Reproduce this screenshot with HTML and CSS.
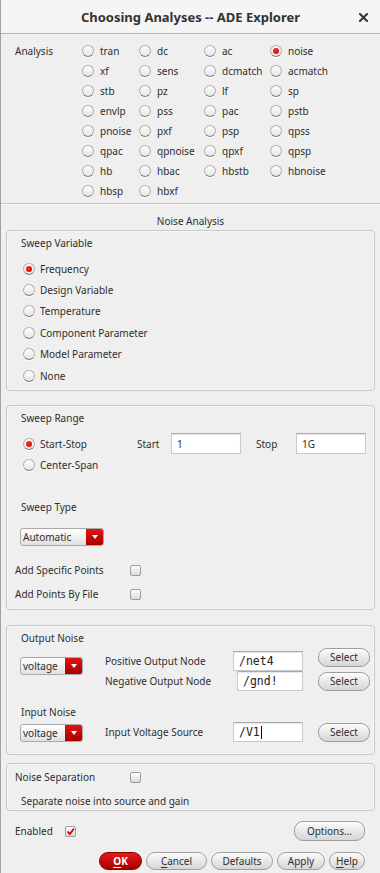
FILE: index.html
```html
<!DOCTYPE html>
<html lang="en">
<head>
    <meta charset="UTF-8">
    <meta name="viewport" content="width=device-width, initial-scale=1.0">
    <title>Choosing Analyses -- ADE Explorer</title>
    <link rel="stylesheet" href="styles.css">
</head>
<body>
<div class="window">
    <header class="titlebar">
        <span class="title">Choosing Analyses -- ADE Explorer</span>
        <svg class="close" width="9" height="9" viewBox="0 0 9 9">
            <path d="M1 1 L8 8 M8 1 L1 8" stroke="#333" stroke-width="2" stroke-linecap="square"/>
        </svg>
    </header>

    <section class="analysis">
        <div class="analysis-label">Analysis</div>
        <div class="analysis-grid">
            <label class="radio"><span class="radio-btn"></span>tran</label>
            <label class="radio"><span class="radio-btn"></span>dc</label>
            <label class="radio"><span class="radio-btn"></span>ac</label>
            <label class="radio"><span class="radio-btn on"></span>noise</label>
            <label class="radio"><span class="radio-btn"></span>xf</label>
            <label class="radio"><span class="radio-btn"></span>sens</label>
            <label class="radio"><span class="radio-btn"></span>dcmatch</label>
            <label class="radio"><span class="radio-btn"></span>acmatch</label>
            <label class="radio"><span class="radio-btn"></span>stb</label>
            <label class="radio"><span class="radio-btn"></span>pz</label>
            <label class="radio"><span class="radio-btn"></span>lf</label>
            <label class="radio"><span class="radio-btn"></span>sp</label>
            <label class="radio"><span class="radio-btn"></span>envlp</label>
            <label class="radio"><span class="radio-btn"></span>pss</label>
            <label class="radio"><span class="radio-btn"></span>pac</label>
            <label class="radio"><span class="radio-btn"></span>pstb</label>
            <label class="radio"><span class="radio-btn"></span>pnoise</label>
            <label class="radio"><span class="radio-btn"></span>pxf</label>
            <label class="radio"><span class="radio-btn"></span>psp</label>
            <label class="radio"><span class="radio-btn"></span>qpss</label>
            <label class="radio"><span class="radio-btn"></span>qpac</label>
            <label class="radio"><span class="radio-btn"></span>qpnoise</label>
            <label class="radio"><span class="radio-btn"></span>qpxf</label>
            <label class="radio"><span class="radio-btn"></span>qpsp</label>
            <label class="radio"><span class="radio-btn"></span>hb</label>
            <label class="radio"><span class="radio-btn"></span>hbac</label>
            <label class="radio"><span class="radio-btn"></span>hbstb</label>
            <label class="radio"><span class="radio-btn"></span>hbnoise</label>
            <label class="radio"><span class="radio-btn"></span>hbsp</label>
            <label class="radio"><span class="radio-btn"></span>hbxf</label>
        </div>
    </section>

    <div class="divider"></div>
    <div class="section-title">Noise Analysis</div>

    <div class="group sweep-var">
        <div class="group-title">Sweep Variable</div>
        <div class="radio-list">
            <label class="radio"><span class="radio-btn on"></span>Frequency</label>
            <label class="radio"><span class="radio-btn"></span>Design Variable</label>
            <label class="radio"><span class="radio-btn"></span>Temperature</label>
            <label class="radio"><span class="radio-btn"></span>Component Parameter</label>
            <label class="radio"><span class="radio-btn"></span>Model Parameter</label>
            <label class="radio"><span class="radio-btn"></span>None</label>
        </div>
    </div>

    <div class="group sweep-range">
        <div class="group-title">Sweep Range</div>
        <div class="range-row">
            <div class="radio-list range-radios">
                <label class="radio"><span class="radio-btn on"></span>Start-Stop</label>
                <label class="radio"><span class="radio-btn"></span>Center-Span</label>
            </div>
            <div class="range-fields">
                <span class="start-label">Start</span>
                <div class="field range-field">1</div>
                <span class="stop-label">Stop</span>
                <div class="field range-field">1G</div>
            </div>
        </div>
        <div class="group-title sweep-type">Sweep Type</div>
        <div class="combo combo-wide">
            <span class="combo-text">Automatic</span>
            <span class="combo-arrow"></span>
        </div>
        <div class="check-row first">
            <span class="check-label">Add Specific Points</span>
            <span class="check"></span>
        </div>
        <div class="check-row">
            <span class="check-label">Add Points By File</span>
            <span class="check"></span>
        </div>
    </div>

    <div class="group noise-nodes">
        <div class="group-title">Output Noise</div>
        <div class="node-grid">
            <div class="combo combo-small node-combo">
                <span class="combo-text">voltage</span>
                <span class="combo-arrow"></span>
            </div>
            <span class="node-label pos-label">Positive Output Node</span>
            <div class="field mono pos-field">/net4</div>
            <button class="btn pos-select">Select</button>
            <span class="node-label neg-label">Negative Output Node</span>
            <div class="field mono neg-field">/gnd!</div>
            <button class="btn neg-select">Select</button>
        </div>
        <div class="group-title input-title">Input Noise</div>
        <div class="node-grid single">
            <div class="combo combo-small src-combo">
                <span class="combo-text">voltage</span>
                <span class="combo-arrow"></span>
            </div>
            <span class="node-label">Input Voltage Source</span>
            <div class="field mono src-field">/V1<span class="caret"></span></div>
            <button class="btn src-select">Select</button>
        </div>
    </div>

    <div class="group separation">
        <div class="check-row">
            <span class="check-label">Noise Separation</span>
            <span class="check"></span>
        </div>
        <div class="sep-text">Separate noise into source and gain</div>
    </div>

    <div class="enabled-row">
        <div class="enabled">
            <span class="enabled-label">Enabled</span>
            <span class="check">
                <svg width="9" height="9" viewBox="0 0 9 9">
                    <path d="M1.5 4.5 L3.8 7 L8 1.5" fill="none" stroke="#d40000" stroke-width="1.8"/>
                </svg>
            </span>
        </div>
        <button class="btn options">Options...</button>
    </div>

    <div class="footer">
        <button class="btn btn-ok"><u>O</u>K</button>
        <button class="btn btn-cancel"><u>C</u>ancel</button>
        <button class="btn btn-defaults">Defaults</button>
        <button class="btn btn-apply">Apply</button>
        <button class="btn btn-help"><u>H</u>elp</button>
    </div>
</div>
</body>
</html>
```

FILE: styles.css
```css
body {
    margin: 0;
    font-family: "Noto Sans", sans-serif;
    font-size: 10px;
    color: #2e2e2e;
    background-color: #efefef;
}
.window {
    width: 380px;
    height: 873px;
    box-sizing: border-box;
    border-left: 1px solid #a2a2a2;
    background-color: #efefef;
    overflow: hidden;
}
.titlebar {
    height: 33px;
    border-bottom: 1px solid #b4b4b4;
    background-color: #f5f5f5;
    display: flex;
    align-items: center;
    justify-content: center;
    position: relative;
}
.title {
    font-size: 13px;
    font-weight: bold;
    color: #333;
}
.close {
    position: absolute;
    right: 12px;
    top: 13px;
}

/* analysis chooser */
.analysis {
    display: flex;
    padding: 7px 0 0 14px;
}
.analysis-label {
    width: 67px;
    line-height: 20px;
}
.analysis-grid {
    display: grid;
    grid-template-columns: 57px 65px 66px 1fr;
    grid-auto-rows: 20px;
}
.radio {
    display: flex;
    align-items: center;
    gap: 6px;
    white-space: nowrap;
}
.radio-btn {
    flex: none;
    width: 12px;
    height: 12px;
    box-sizing: border-box;
    border-radius: 50%;
    border: 1px solid #b0b0b0;
    border-bottom-color: #828282;
    background: linear-gradient(#fdfdfd, #e6e6e6);
    box-shadow: 0 1px 0 #fff;
    position: relative;
}
.radio-btn.on::after {
    content: "";
    position: absolute;
    left: 2px;
    top: 2px;
    width: 6px;
    height: 6px;
    border-radius: 50%;
    background: radial-gradient(circle at 40% 35%, #ff3030, #c00000);
}
.divider {
    margin-top: 2px;
    border-top: 1px solid #c4c4c4;
    border-bottom: 1px solid #fafafa;
}
.section-title {
    text-align: center;
    line-height: 14px;
    padding-top: 9px;
}

/* framed groups */
.group {
    margin: 2px 5px 0;
    border: 1px solid #c8c8c8;
    border-radius: 4px;
    padding: 5px 3px 4px 14px;
    box-shadow: inset 0 0 0 1px #f7f7f7;
}
.group-title {
    line-height: 14px;
}
.radio-list {
    margin-top: 8px;
}
.radio-list .radio {
    height: 21.4px;
    padding-left: 2px;
    gap: 5px;
}
.sweep-range {
    margin-top: 14px;
    padding-bottom: 5px;
}
.range-row {
    display: flex;
    align-items: flex-start;
}
.range-radios {
    width: 116px;
}
.range-fields {
    display: flex;
    align-items: center;
    margin-top: 8px;
}
.start-label {
    width: 34px;
}
.stop-label {
    width: 40px;
    margin-left: 15px;
}
.field {
    height: 21px;
    box-sizing: border-box;
    background-color: #fff;
    border: 1px solid #cacaca;
    border-top-color: #a9a9a9;
    box-shadow: inset 0 1px 1px rgba(0, 0, 0, 0.1);
    padding-left: 5px;
    display: flex;
    align-items: center;
}
.range-field {
    width: 70px;
}
.mono {
    font-family: "DejaVu Sans Mono", monospace;
    font-size: 11.5px;
    color: #222;
}
.caret {
    width: 1px;
    height: 13px;
    margin-left: 1px;
    background-color: #111;
}
.sweep-type {
    margin-top: 24px;
}
.combo {
    display: flex;
    box-sizing: border-box;
    border: 1px solid #a9a9a9;
    border-radius: 3px;
    background: linear-gradient(#ffffff, #e0e0e0);
    overflow: hidden;
}
.combo-wide {
    width: 84px;
    height: 18px;
    margin: 14px 0 0 -1px;
}
.combo-text {
    flex: 1;
    padding-left: 2px;
    line-height: 16px;
}
.combo-arrow {
    width: 17px;
    background: linear-gradient(#e01414, #a60000);
    display: flex;
    align-items: center;
    justify-content: center;
}
.combo-arrow::after {
    content: "";
    border-left: 3px solid transparent;
    border-right: 3px solid transparent;
    border-top: 4px solid #fff;
}
.check-row {
    display: flex;
    align-items: center;
    height: 20px;
    margin: 4px 0 0 -6px;
}
.check-row.first {
    margin-top: 14px;
}
.check-label {
    width: 115px;
}
.check {
    width: 11px;
    height: 11px;
    box-sizing: border-box;
    border: 1px solid #9d9d9d;
    border-radius: 2px;
    background: linear-gradient(#fdfdfd, #dadada);
    display: flex;
    align-items: center;
    justify-content: center;
}

/* output / input noise */
.noise-nodes {
    margin-top: 15px;
    padding-bottom: 12px;
}
.node-grid {
    display: grid;
    grid-template-columns: 84px 128px 70px 15px 52px;
    grid-template-rows: 20px 20px;
    align-items: center;
    margin-top: 6px;
}
.node-grid.single {
    grid-template-rows: 20px;
    margin-top: 3px;
}
.combo-small {
    width: 63px;
    height: 18px;
    margin-left: -1px;
}
.node-combo {
    grid-column: 1;
    grid-row: 1 / 3;
    align-self: start;
    margin-top: 6px;
}
.src-combo {
    grid-column: 1;
    margin-top: 1px;
}
.pos-label, .neg-label {
    grid-column: 2;
}
.pos-label { grid-row: 1; }
.neg-label { grid-row: 2; }
.pos-field, .neg-field, .src-field {
    grid-column: 3;
    height: 20px;
}
.pos-field { grid-row: 1; }
.neg-field {
    grid-row: 2;
    margin-left: 4px;
}
.pos-select, .neg-select, .src-select {
    grid-column: 5;
}
.pos-select {
    grid-row: 1;
    margin-top: -8px;
}
.neg-select { grid-row: 2; }
.input-title {
    margin-top: 14px;
}

.btn {
    height: 19px;
    box-sizing: border-box;
    padding: 0;
    font-family: "Noto Sans", sans-serif;
    font-size: 10px;
    color: #2e2e2e;
    border: 1px solid #9e9e9e;
    border-radius: 9px;
    background: linear-gradient(#fbfbfb, #d6d6d6);
    box-shadow: inset 0 1px 0 #fff;
}
.btn u {
    text-decoration-thickness: 1px;
    text-underline-offset: 2px;
}
.separation {
    margin-top: 8px;
    padding-top: 6px;
    padding-bottom: 2px;
}
.separation .check-row {
    height: 14px;
    margin-top: 0;
}
.sep-text {
    line-height: 14px;
    margin-top: 10px;
}

.enabled-row {
    display: flex;
    align-items: center;
    justify-content: space-between;
    height: 20px;
    margin: 10px 15px 0 14px;
}
.enabled {
    display: flex;
    align-items: center;
}
.enabled-label {
    width: 50px;
}
.options {
    width: 71px;
    height: 20px;
}
.footer {
    display: flex;
    justify-content: flex-end;
    gap: 4px;
    margin: 11px 15px 0 0;
}
.footer .btn {
    height: 18px;
}
.btn-ok {
    width: 43px;
    color: #fff;
    font-weight: bold;
    border-color: #8c0000;
    background: linear-gradient(#e41a1a, #a80000);
    box-shadow: none;
}
.btn-cancel { width: 61px; }
.btn-defaults { width: 62px; }
.btn-apply { width: 48px; }
.btn-help { width: 36px; }
```
